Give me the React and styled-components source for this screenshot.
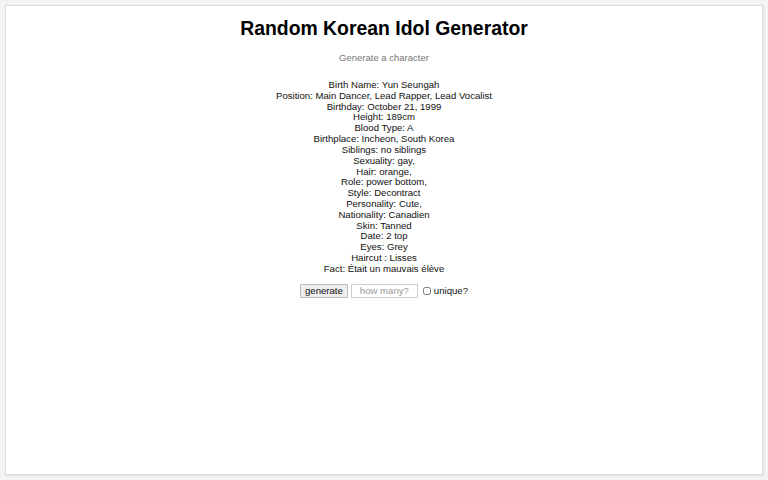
import React from 'react'
import styled, { createGlobalStyle } from 'styled-components'

const GlobalStyle = createGlobalStyle`
  html, body {
    margin: 0;
    padding: 0;
    background: #f3f3f3;
    font-family: "Liberation Sans", Arial, sans-serif;
  }
`

const Page = styled.div`
  padding: 5px;
  height: 480px;
  box-sizing: border-box;
`

const Card = styled.div`
  height: 100%;
  box-sizing: border-box;
  background: #fff;
  border: 1px solid #dcdcdc;
  box-shadow: 1px 1px 2px rgba(0, 0, 0, 0.08);
  text-align: center;
  padding-top: 10px;
`

const Title = styled.h1`
  margin: 0;
  font-size: 19.4px;
  font-weight: bold;
  color: #000;
  line-height: 24px;
`

const Subtitle = styled.p`
  margin: 12px 0 0;
  font-size: 9.5px;
  color: #777;
`

const Profile = styled.div`
  margin-top: 17px;
  font-size: 9.6px;
  line-height: 10.82px;
  color: #111;
`

const Controls = styled.div`
  margin-top: 9px;
  display: flex;
  justify-content: center;
  align-items: center;
  gap: 3px;
  font-size: 9.6px;
`

const Button = styled.button`
  font-family: inherit;
  font-size: 9.6px;
  height: 14px;
  padding: 0 4px;
  background: #eee;
  border: 1px solid #bbb;
  border-radius: 1px;
  color: #111;
`

const Count = styled.input`
  font-family: inherit;
  font-size: 9.6px;
  width: 67px;
  height: 14px;
  box-sizing: border-box;
  border: 1px solid #ccc;
  padding: 0 4px;
  text-align: center;
  &::placeholder { color: #999; }
`

const Check = styled.label`
  display: flex;
  align-items: center;
  gap: 3px;
  margin-left: 2px;
  color: #111;
  input { margin: 0; width: 8px; height: 8px; }
`

const fields = [
  ['Birth Name', 'Yun Seungah'],
  ['Position', 'Main Dancer, Lead Rapper, Lead Vocalist'],
  ['Birthday', 'October 21, 1999'],
  ['Height', '189cm'],
  ['Blood Type', 'A'],
  ['Birthplace', 'Incheon, South Korea'],
  ['Siblings', 'no siblings'],
  ['Sexuality', 'gay,'],
  ['Hair', 'orange,'],
  ['Role', 'power bottom,'],
  ['Style', 'Decontract'],
  ['Personality', 'Cute,'],
  ['Nationality', 'Canadien'],
  ['Skin', 'Tanned'],
  ['Date', '2 top'],
  ['Eyes', 'Grey'],
  ['Haircut ', 'Lisses'],
  ['Fact', 'Était un mauvais élève'],
]

export default function App() {
  return (
    <>
      <GlobalStyle />
      <Page>
        <Card>
          <Title>Random Korean Idol Generator</Title>
          <Subtitle>Generate a character</Subtitle>
          <Profile>
            {fields.map(([k, v]) => (
              <div key={k}>{k}: {v}</div>
            ))}
          </Profile>
          <Controls>
            <Button>generate</Button>
            <Count placeholder="how many?" />
            <Check><input type="checkbox" />unique?</Check>
          </Controls>
        </Card>
      </Page>
    </>
  )
}
